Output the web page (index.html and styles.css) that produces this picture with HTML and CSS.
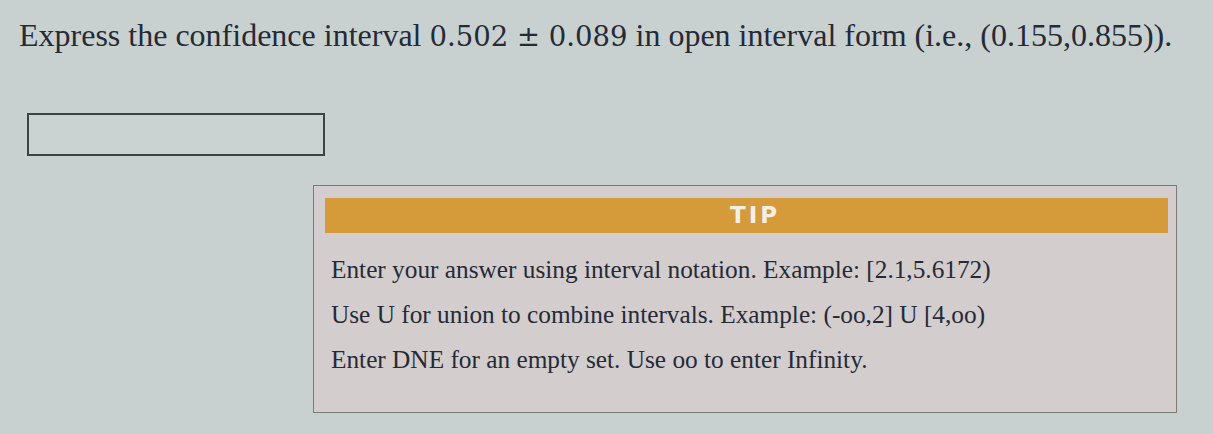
FILE: index.html
```html
<!DOCTYPE html>
<html>
<head>
<meta charset="utf-8">
<link rel="stylesheet" href="styles.css">
</head>
<body>
<div class="page">
  <p class="question">Express the confidence interval <span class="math">0.502 ± 0.089</span> in open interval form (i.e., (0.155,0.855)).</p>
  <div class="answer"></div>
  <div class="tip">
    <div class="tip-head">TIP</div>
    <div class="tip-body">
      <p class="tip-line">Enter your answer using interval notation. Example: [2.1,5.6172)</p>
      <p class="tip-line">Use U for union to combine intervals. Example: (-oo,2] U [4,oo)</p>
      <p class="tip-line">Enter DNE for an empty set. Use oo to enter Infinity.</p>
    </div>
  </div>
</div>
</body>
</html>
```
FILE: styles.css
```css
html, body {
  margin: 0;
  padding: 0;
  background: #c9d1d0;
}
.page {
  width: 1213px;
  height: 434px;
  box-sizing: border-box;
  padding: 17px 0 0 19px;
  font-family: "Liberation Serif", "Times New Roman", serif;
  color: #252a37;
}
.question {
  margin: 0;
  font-size: 32px;
  line-height: 36px;
  white-space: nowrap;
}
.math {
  font-family: "DejaVu Serif", serif;
  font-size: 27.5px;
}
.answer {
  margin: 59px 0 0 8px;
  width: 294px;
  height: 39px;
  border: 2px solid #3c4246;
  background: #cbd3d2;
}
.tip {
  margin: 29px 0 0 294px;
  width: 864px;
  height: 228px;
  box-sizing: border-box;
  border: 1.5px solid #7f7a76;
  background: #d3cdcd;
  padding: 12px 8px 0 11px;
}
.tip-head {
  height: 35px;
  background: #d59a3a;
  color: #f4efe6;
  font-family: "DejaVu Sans", sans-serif;
  font-weight: bold;
  font-size: 23px;
  letter-spacing: 3px;
  text-align: center;
  line-height: 35px;
  padding-left: 17px;
}
.tip-body {
  padding: 14px 0 0 6px;
}
.tip-line {
  margin: 0;
  font-size: 25.3px;
  line-height: 45px;
  white-space: nowrap;
}
```
